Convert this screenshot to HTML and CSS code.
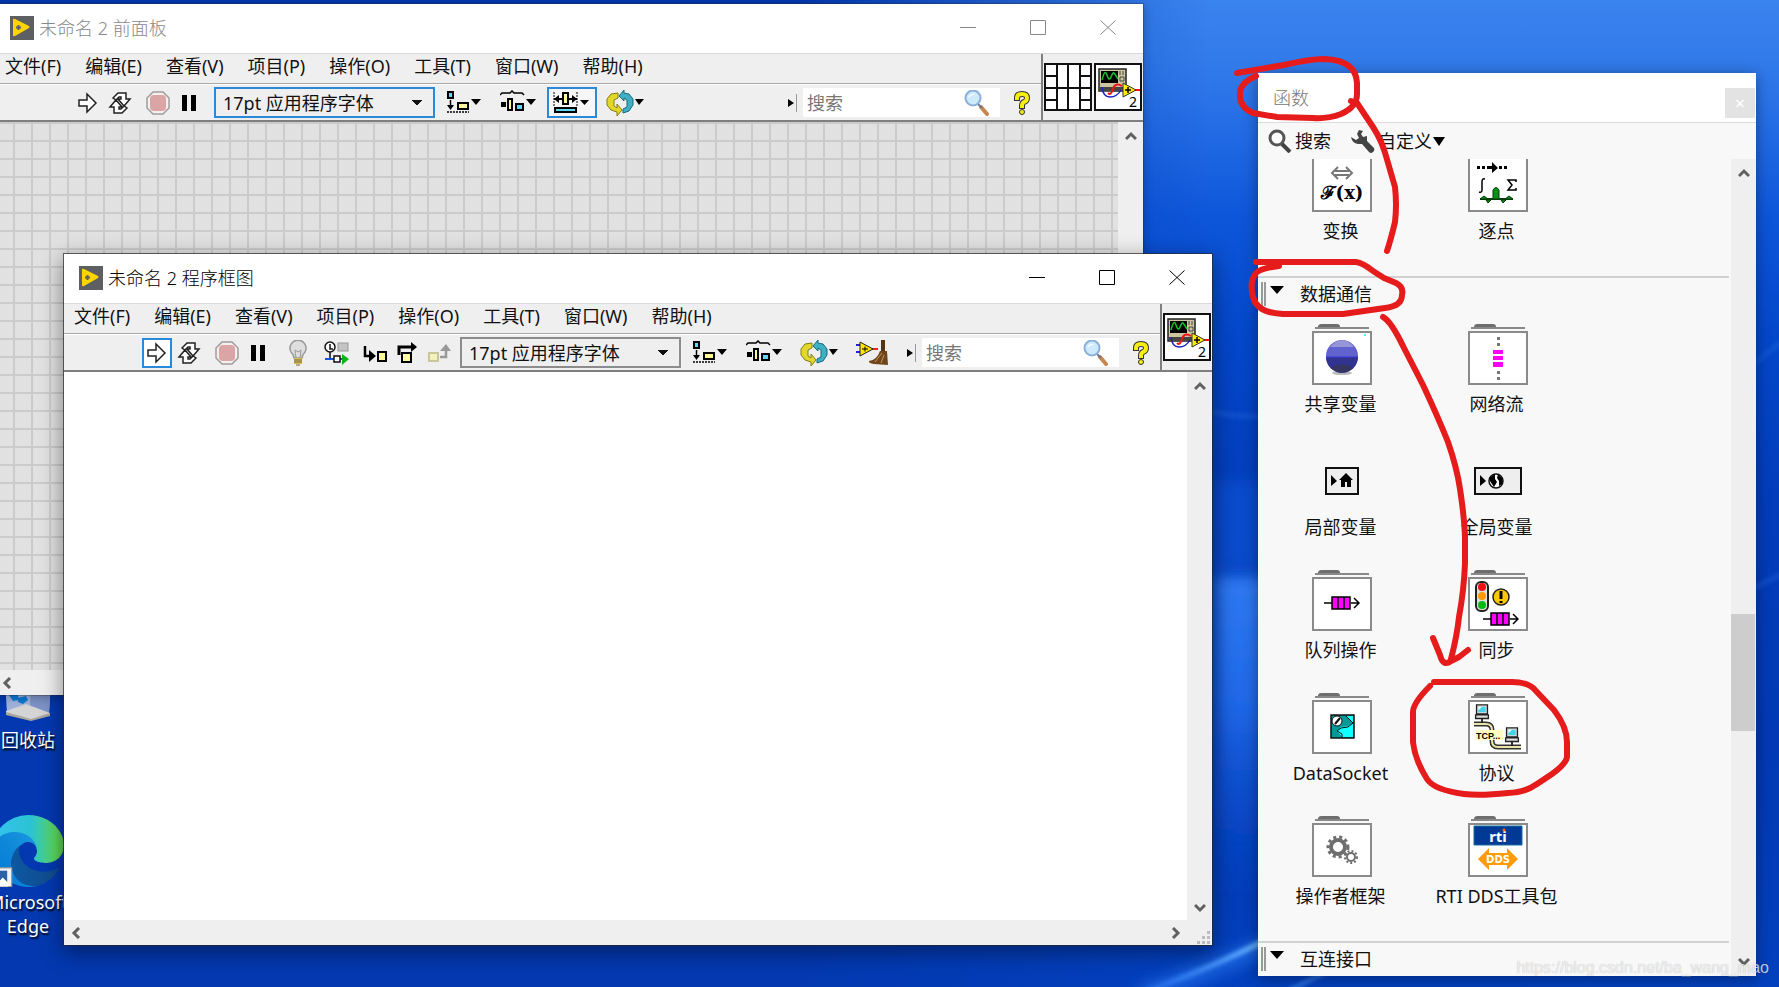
FILE: index.html
```html
<!DOCTYPE html>
<html lang="zh-CN">
<head>
  <meta charset="UTF-8">
  <meta name="viewport" content="width=device-width, initial-scale=1.0">
  <title>LabVIEW</title>
  <link rel="stylesheet" href="styles.css">
</head>
<body>
  <!-- shared icons -->
  <svg class="defs" aria-hidden="true">
    <symbol id="i-app" viewBox="0 0 24 24">
      <path fill="#5d5f62" d="M0 0h24v24H0z"/>
      <path fill="#ffd500" d="M3 4q0-2 2-1l14 7q1 1 0 2L5 20q-2 1-2-1z"/>
      <path stroke="#5d5f62" stroke-width="2" d="M6 11.500h5M8.500 9v5"/>
    </symbol>
    <symbol id="i-run" viewBox="0 0 30 30">
      <path fill="#fff" stroke="#222" stroke-width="1.500" d="M6 12h8V6l9 9-9 9v-6H6z"/>
    </symbol>
    <symbol id="i-loop" viewBox="0 0 24 24">
      <g fill="#fff" stroke="#222" stroke-width="1.500" stroke-linejoin="miter">
        <path d="M5 7l5-5h8v6h4l-6 7-6-7h3V6h-2L8 9z"/>
        <path d="M19 17l-5 5H6v-6H2l6-7 6 7h-3v2h2l3-3z"/>
      </g>
    </symbol>
    <symbol id="i-stop" viewBox="0 0 24 24">
      <path fill="#f4f0f0" stroke="#a09c9c" stroke-width="1.500" d="M7 1h10l6 6v10l-6 6H7l-6-6V7z"/>
      <rect x="4" y="4" width="16" height="16" rx="4" fill="#dba5a5"/>
    </symbol>
    <symbol id="i-pause" viewBox="0 0 14 16"><path d="M0 0h5v16H0zM9 0h5v16H9z"/></symbol>
    <symbol id="i-bulb" viewBox="0 0 26 26">
      <path fill="#dedede" stroke="#999" stroke-width="1.500" d="M9 18q0-3-3-6a8 8 0 1 1 14 0q-3 3-3 6z"/>
      <path fill="none" stroke="#999" d="M11 18l-1-8 3 2 3-2-1 8"/>
      <path fill="#d9bf58" d="M9 18h8v6H9z"/><path stroke="#77683b" d="M9 20h8M9 22h8M11 25h4"/>
    </symbol>
    <symbol id="i-retain" viewBox="0 0 32 26">
      <circle cx="9" cy="7" r="5" fill="#fff" stroke="#111" stroke-width="1.500"/>
      <path d="M9 4v5h3M9 12v7" fill="none" stroke="#111" stroke-width="1.500"/>
      <rect x="17" y="3" width="10" height="8" fill="#c4c4c4" stroke="#999"/>
      <path stroke="#1455d9" stroke-width="2" d="M4 19h18"/>
      <path fill="#fff" stroke="#111" stroke-width="1.500" d="M13 16h6v6h-6z"/>
      <path fill="#0ab519" d="M21 14l7 5-7 6z"/>
    </symbol>
    <symbol id="i-into" viewBox="0 0 24 24">
      <path fill="none" stroke="#000" stroke-width="2.500" d="M2 5v10h7"/><path d="M6 9l7 6-7 6z"/>
      <path fill="#fffa9a" stroke="#000" stroke-width="2" d="M15 11h8v9h-8z"/>
    </symbol>
    <symbol id="i-over" viewBox="0 0 20 24">
      <path fill="none" stroke="#000" stroke-width="3" d="M2 14V6h13"/><path d="M14 1l6 5-6 5z"/>
      <path fill="#fffa9a" stroke="#000" stroke-width="2" d="M5 12h9v9H5z"/>
    </symbol>
    <symbol id="i-out" viewBox="0 0 24 24">
      <path fill="#f3f1bd" stroke="#c9c79a" stroke-width="2" d="M2 12h9v8H2z"/>
      <path fill="none" stroke="#999" stroke-width="2.500" d="M13 16h6V8"/><path fill="#999" d="M13 10l6-7 5 7z"/>
    </symbol>
    <symbol id="i-align" viewBox="0 0 38 26">
      <path fill="#5fd8f5" stroke="#000" stroke-width="2" d="M2 2h5v6H2z"/>
      <path stroke="#000" stroke-width="1.500" d="M4.500 10v8" fill="none"/>
      <path stroke="#000" stroke-width="1.500" stroke-dasharray="2 1" d="M1 22h22"/>
      <path d="M1 15h7l-3.500 5z"/>
      <path fill="#fff89a" stroke="#000" stroke-width="2" d="M12 13h10v6H12z"/>
      <path d="M25 9h10l-5 6z"/>
    </symbol>
    <symbol id="i-dist" viewBox="0 0 38 26">
      <path fill="none" stroke="#000" stroke-width="1.500" d="M0 5l2-2h8l2-2 2 2h8l2 2"/>
      <path d="M1 12h5v5H1z"/>
      <path fill="#fff89a" stroke="#000" stroke-width="2" d="M8 9h4v11H8z"/>
      <path fill="#5fd8f5" stroke="#000" stroke-width="2" d="M16 14h7v6h-7z"/>
      <path d="M26 9h10l-5 6z"/>
    </symbol>
    <symbol id="i-resize" viewBox="0 0 38 26">
      <path stroke="#000" stroke-dasharray="2 1" d="M1 2v14M24 2v14"/>
      <path stroke="#000" stroke-width="2" d="M1 9h8M16 9h8"/>
      <path d="M1 9l5-4v8zM24 9l-5-4v8z"/>
      <path fill="#fff89a" stroke="#000" stroke-width="2" d="M10 3h5v11h-5z"/>
      <path fill="#5fd8f5" stroke="#000" stroke-width="2" d="M2 18h21v4H2z"/>
      <path d="M27 10h9l-4.500 5z"/>
    </symbol>
    <symbol id="i-reorder" viewBox="0 0 38 26">
      <path fill="#e3d729" stroke="#837c13" d="M12 3v5l-4 2v6l3 2v-4l5 6-5 6v-4l-6-2-4-5v-6l4-5z"/>
      <path fill="#3eafc4" stroke="#176b7b" d="M18 0l-5 6 5 5V8l3 2v7l-4 2v4l6-2 4-6V9l-4-5-5-1z"/>
      <path d="M29 9h9l-5 6z"/>
    </symbol>
    <symbol id="i-broom" viewBox="0 0 38 28">
      <path stroke="#e22" stroke-width="2" d="M14 10h10"/><path stroke="#22d" stroke-width="2" d="M2 6h5M2 13h5"/>
      <path fill="#ffe500" stroke="#222" d="M6 3l13 7-13 7z"/><path stroke="#000" d="M8 10h6M11 7.500v5"/>
      <path stroke="#593410" stroke-width="4" d="M29 1v12"/>
      <path fill="#70451c" d="M26 12h7l1 14-14-1q-6-1-5-3 8-1 11-10z"/>
      <path fill="none" stroke="#c39b5b" d="M28 14l-7 9M30 16l-3 8"/>
    </symbol>
    <symbol id="i-glass" viewBox="0 0 26 26">
      <path stroke="#c98750" stroke-width="4" stroke-linecap="round" d="M17 17l6 7"/>
      <path stroke="#6d7890" stroke-width="2" d="M14 14l4 4"/>
      <circle cx="9" cy="8" r="7.500" fill="#cdeafc" stroke="#8cafd9" stroke-width="2"/>
      <path fill="#fff" d="M4 8q2-5 8-4-5 1-8 4z"/>
    </symbol>
    <symbol id="i-help" viewBox="0 0 16 24">
      <g fill="none" stroke-linecap="square">
        <path stroke="#333" stroke-width="6" d="M3 7q0-4 5-4t5 4q0 3-3 4-2 1-2 4"/>
        <path stroke="#f7ee12" stroke-width="4" d="M3 7q0-4 5-4t5 4q0 3-3 4-2 1-2 4"/>
      </g>
      <circle cx="8" cy="21" r="2.500" fill="#f7ee12" stroke="#333"/>
    </symbol>
    <symbol id="i-vi" viewBox="0 0 48 48">
      <path fill="#fff" stroke="#111" stroke-width="2" d="M1 1h46v46H1z"/>
      <path fill="#cbc6a0" stroke="#222" stroke-width="1.500" d="M5 6h27v22H5z"/>
      <path d="M7 8h17v12H7z"/>
      <path fill="none" stroke="#16c42c" stroke-width="1.500" d="M8 17q3-12 5-5t4 2 3-4 4 6"/>
      <path stroke="#444" d="M26 8v4M29 8v4M26 14h4v4h-4z" fill="none"/>
      <path fill="#444" d="M6 24h24v3H6z"/>
      <path fill="none" stroke="#1a1fc0" stroke-width="1.500" d="M8 24q1 10 8 10t11-7"/>
      <path fill="none" stroke="#ee1414" stroke-width="2" d="M14 30q3 3 5-4t9-3M40 27h6"/>
      <path fill="#ffee00" stroke="#333" d="M29 20l13 7-13 7z"/><path stroke="#000" stroke-width="1.500" d="M31 27h6M34 24v6"/>
    </symbol>
    <symbol id="i-pane" viewBox="0 0 48 48">
      <path fill="#fff" stroke="#111" stroke-width="2" d="M1 1h46v46H1zM13 1v46M24 1v46M36 1v46M1 25h46M1 13h12M1 37h12M36 13h11M36 37h11"/>
    </symbol>
    <symbol id="i-folder" viewBox="0 0 60 61">
      <path fill="#6e6e6e" d="M6 2q1-2 3-2h16q3 0 3 3H6z"/><path fill="#888" d="M3 3h54v2H3z"/>
      <path fill="#fff" stroke="#8a8a8a" stroke-width="2" d="M1 8h58v52H1z"/>
    </symbol>
    <symbol id="i-folder-cut" viewBox="0 0 60 61">
      <path fill="#fff" stroke="#8a8a8a" stroke-width="2" d="M1 0v60h58V0"/>
    </symbol>
    <symbol id="i-queue" viewBox="0 0 36 16">
      <path stroke="#000" stroke-width="1.500" d="M0 8h8M27 8h8M30 3l5 5-5 5" fill="none"/>
      <path fill="#f0f" stroke="#000" stroke-width="1.500" d="M8 2h18v12H8zM14 2v12M20 2v12"/>
    </symbol>
    <symbol id="i-pc" viewBox="0 0 16 22">
      <path fill="#ddd" stroke="#222" stroke-width="1.500" d="M2 1h12v10H2zM1 12h14v4H1z"/>
      <path fill="#43d3e8" d="M4 3h8v6H4z"/><path fill="#fff" d="M4 3h4L4 7z"/><path stroke="#222" stroke-width="2" d="M8 16v5"/>
    </symbol>
    <symbol id="i-up" viewBox="0 0 12 10"><path fill="none" stroke="#606060" stroke-width="3" d="M1 8l5-5 5 5"/></symbol>
    <symbol id="i-down" viewBox="0 0 12 10"><path fill="none" stroke="#606060" stroke-width="3" d="M1 2l5 5 5-5"/></symbol>
    <symbol id="i-left" viewBox="0 0 10 12"><path fill="none" stroke="#606060" stroke-width="3" d="M8 1L3 6l5 5"/></symbol>
    <symbol id="i-right" viewBox="0 0 10 12"><path fill="none" stroke="#606060" stroke-width="3" d="M2 1l5 5-5 5"/></symbol>
    <symbol id="i-min" viewBox="0 0 16 16"><path stroke="currentColor" d="M0 7.500h16"/></symbol>
    <symbol id="i-max" viewBox="0 0 16 16"><path fill="none" stroke="currentColor" d="M.5.5h15v14H.5z"/></symbol>
    <symbol id="i-close" viewBox="0 0 16 16"><path stroke="currentColor" d="M.5.5l15 14M15.500.5l-15 14"/></symbol>
    <symbol id="i-tick" viewBox="0 0 11 18"><path d="M1 5l6 4-6 4z"/><path stroke="#999" d="M9.500 0v18"/></symbol>
  </svg>

  <main class="desktop">
    <svg class="wallpaper" viewBox="0 0 1779 987" preserveAspectRatio="none" aria-hidden="true">
      <defs>
        <linearGradient id="glow" x1="0" y1="0" x2="0" y2="1"><stop offset="0" stop-color="#2f7af2"/><stop offset=".4" stop-color="#1f68e8"/><stop offset="1" stop-color="#0a4fd2" stop-opacity="0"/></linearGradient>
        <linearGradient id="streak"><stop offset="0" stop-color="#2b7bff" stop-opacity="0"/><stop offset=".6" stop-color="#4a9aff"/><stop offset="1" stop-color="#8ad0ff"/></linearGradient>
        <filter id="soft"><feGaussianBlur stdDeviation="8"/></filter>
        <filter id="soft-sm"><feGaussianBlur stdDeviation="2"/></filter>
      </defs>
      <path d="M1215 575h60v320h-60z" fill="url(#glow)" filter="url(#soft)"/>
      <path d="M1215 480h60v90h-60z" fill="#0c55d8" opacity=".6" filter="url(#soft)"/>
      <path d="M1140 996Q1200 975 1290 935" fill="none" stroke="#2c7cf5" stroke-width="14" opacity=".7" filter="url(#soft)"/>
      <path d="M1110 1002Q1190 980 1290 928" fill="none" stroke="url(#streak)" stroke-width="5" filter="url(#soft-sm)"/>
      <path d="M1290 990l40-20" stroke="#3a87ef" stroke-width="3" filter="url(#soft-sm)"/>
      <path d="M1212 412q30 6 60 4M1740 375l50-40M1750 590l40-20" stroke="#2468df" stroke-width="4" opacity=".5" fill="none" filter="url(#soft-sm)"/>
    </svg>

    <div class="shortcut shortcut-bin">
      <svg width="48" height="60" viewBox="0 0 48 60" aria-hidden="true">
        <path fill="#9fb2da" d="M0 4h48l-3 48-19 7L3 52z"/><path fill="#7d93c8" d="M27 4h21l-3 48-19 7z"/>
        <path fill="#d4d4d4" d="M2 50l20-7 24 9v2l-19 5-25-7z"/><path fill="#aaa69d" d="M2 51l25 7 19-6v3l-19 5L2 54z"/>
        <path fill="#0b79d4" d="M5 34h9l1 5-6 1zM14 37l8-2 2 4-5 4-5-2z"/>
      </svg>
      <span>回收站</span>
    </div>
    <div class="shortcut shortcut-edge">
      <svg width="72" height="72" viewBox="0 0 256 256" aria-hidden="true">
        <defs>
          <linearGradient id="e1"><stop offset="0" stop-color="#0c59a4"/><stop offset="1" stop-color="#114a8b"/></linearGradient>
          <linearGradient id="e2" x1="1" y1="0" x2="0" y2="1"><stop offset="0" stop-color="#1b9de2"/><stop offset=".5" stop-color="#0e86d8"/><stop offset="1" stop-color="#0078d7"/></linearGradient>
          <linearGradient id="e3"><stop offset="0" stop-color="#35c1f1"/><stop offset=".55" stop-color="#2bc3d2"/><stop offset=".88" stop-color="#5ad85c"/><stop offset="1" stop-color="#58c94e"/></linearGradient>
        </defs>
        <path fill="url(#e1)" d="M231 190.500c-3.400 1.800-6.900 3.400-10.500 4.700a101.900 101.900 0 0 1-35.900 6.500c-47.300 0-88.500-32.500-88.500-74.300a31.500 31.500 0 0 1 16.400-27.300c-42.800 1.800-53.800 46.400-53.800 72.500 0 74 68.100 81.400 82.800 81.400 7.900 0 19.800-2.300 27-4.600l1.300-.4a128.300 128.300 0 0 0 66.600-52.800 4 4 0 0 0-5.400-5.700z"/>
        <path fill="url(#e2)" d="M105.700 241.400a79.200 79.200 0 0 1-22.700-21.300 80.700 80.700 0 0 1 29.500-120c3.200-1.500 8.500-4.100 15.600-4a32.400 32.400 0 0 1 25.700 13 31.900 31.900 0 0 1 6.300 18.700c0-.2 24.500-79.600-80-79.600-43.900 0-80 41.700-80 78.200a130.200 130.200 0 0 0 12.100 56 128 128 0 0 0 156.400 67 75.500 75.500 0 0 1-62.800-8z"/>
        <path fill="url(#e3)" d="M152.300 148.900c-.9 1-3.400 2.500-3.400 5.600 0 2.600 1.700 5.200 4.800 7.300 14.300 10 41.400 8.600 41.500 8.600a59.600 59.600 0 0 0 30.300-8.300 61.400 61.400 0 0 0 30.400-52.900c.3-22.400-8-37.300-11.300-43.900C223.500 23.900 177.700 0 128 0A128 128 0 0 0 0 126.200c.5-36.500 36.800-66 80-66 3.500 0 23.500.3 42 10a72.600 72.600 0 0 1 30.900 29.300c6.100 10.600 7.200 24.100 7.200 29.500s-2.700 13.300-7.800 19.900z"/>
        <path fill="#f4f4f4" stroke="#999" stroke-width="4" d="M0 188h70v66H0z"/><path fill="#2c62a8" d="M6 198h48v52H6z"/>
        <path fill="#fff" d="M38 222l20 20v12H6v-10h12z"/>
      </svg>
      <span>Microsoft<br>Edge</span>
    </div>

    <section class="window front-panel">
      <header class="titlebar">
        <svg width="24" height="24"><use href="#i-app"/></svg>
        <h2>未命名 2 前面板</h2>
        <div class="controls">
          <button aria-label="最小化"><svg width="16" height="16"><use href="#i-min"/></svg></button>
          <button aria-label="最大化"><svg width="16" height="16"><use href="#i-max"/></svg></button>
          <button aria-label="关闭"><svg width="16" height="16"><use href="#i-close"/></svg></button>
        </div>
      </header>
      <div class="head">
        <div class="bars">
          <nav class="menubar">
            <button>文件(F)</button><button>编辑(E)</button><button>查看(V)</button><button>项目(P)</button><button>操作(O)</button><button>工具(T)</button><button>窗口(W)</button><button>帮助(H)</button>
          </nav>
          <div class="toolbar">
            <div class="run-tools">
              <button aria-label="运行"><svg width="30" height="30"><use href="#i-run"/></svg></button>
              <button aria-label="连续运行"><svg width="24" height="24"><use href="#i-loop"/></svg></button>
              <button class="stop" aria-label="中止"><svg width="24" height="24"><use href="#i-stop"/></svg></button>
              <button class="pause" aria-label="暂停"><svg width="14" height="16"><use href="#i-pause"/></svg></button>
            </div>
            <select class="font-select active" aria-label="字体"><option>17pt 应用程序字体</option></select>
            <div class="arrange-tools">
              <button aria-label="对齐"><svg width="38" height="26"><use href="#i-align"/></svg></button>
              <button aria-label="分布"><svg width="38" height="26"><use href="#i-dist"/></svg></button>
              <button class="boxed" aria-label="调整大小"><svg width="38" height="26"><use href="#i-resize"/></svg></button>
              <button aria-label="重新排序"><svg width="38" height="26"><use href="#i-reorder"/></svg></button>
            </div>
            <div class="search-tools">
              <svg width="11" height="18"><use href="#i-tick"/></svg>
              <label class="search"><input type="text" placeholder="搜索" aria-label="搜索"><svg width="26" height="26"><use href="#i-glass"/></svg></label>
              <button aria-label="帮助"><svg width="16" height="24"><use href="#i-help"/></svg></button>
            </div>
          </div>
        </div>
        <div class="vi-icons">
          <svg width="48" height="48"><use href="#i-pane"/></svg>
          <svg width="48" height="48"><use href="#i-vi"/><text x="35" y="44" class="vi-num">2</text></svg>
        </div>
      </div>
      <div class="work">
        <div class="canvas grid"></div>
        <div class="vscroll"><svg width="12" height="10"><use href="#i-up"/></svg><svg width="12" height="10"><use href="#i-down"/></svg></div>
      </div>
      <div class="hscroll"><svg width="10" height="12"><use href="#i-left"/></svg><svg width="10" height="12"><use href="#i-right"/></svg></div>
    </section>

    <section class="window block-diagram">
      <header class="titlebar">
        <svg width="24" height="24"><use href="#i-app"/></svg>
        <h2>未命名 2 程序框图</h2>
        <div class="controls">
          <button aria-label="最小化"><svg width="16" height="16"><use href="#i-min"/></svg></button>
          <button aria-label="最大化"><svg width="16" height="16"><use href="#i-max"/></svg></button>
          <button aria-label="关闭"><svg width="16" height="16"><use href="#i-close"/></svg></button>
        </div>
      </header>
      <div class="head">
        <div class="bars">
          <nav class="menubar">
            <button>文件(F)</button><button>编辑(E)</button><button>查看(V)</button><button>项目(P)</button><button>操作(O)</button><button>工具(T)</button><button>窗口(W)</button><button>帮助(H)</button>
          </nav>
          <div class="toolbar">
            <div class="run-tools">
              <button class="focused" aria-label="运行"><svg width="30" height="30"><use href="#i-run"/></svg></button>
              <button aria-label="连续运行"><svg width="24" height="24"><use href="#i-loop"/></svg></button>
              <button class="stop" aria-label="中止"><svg width="24" height="24"><use href="#i-stop"/></svg></button>
              <button class="pause" aria-label="暂停"><svg width="14" height="16"><use href="#i-pause"/></svg></button>
            </div>
            <div class="debug-tools">
              <button aria-label="高亮显示"><svg width="26" height="26"><use href="#i-bulb"/></svg></button>
              <button aria-label="保存连线值"><svg width="32" height="26"><use href="#i-retain"/></svg></button>
              <button aria-label="步入"><svg width="24" height="24"><use href="#i-into"/></svg></button>
              <button aria-label="步过"><svg width="20" height="24"><use href="#i-over"/></svg></button>
              <button aria-label="步出"><svg width="24" height="24"><use href="#i-out"/></svg></button>
            </div>
            <select class="font-select" aria-label="字体"><option>17pt 应用程序字体</option></select>
            <div class="arrange-tools">
              <button aria-label="对齐"><svg width="38" height="26"><use href="#i-align"/></svg></button>
              <button aria-label="分布"><svg width="38" height="26"><use href="#i-dist"/></svg></button>
              <button aria-label="重新排序"><svg width="38" height="26"><use href="#i-reorder"/></svg></button>
              <button aria-label="整理"><svg width="38" height="28"><use href="#i-broom"/></svg></button>
            </div>
            <div class="search-tools">
              <svg width="11" height="18"><use href="#i-tick"/></svg>
              <label class="search"><input type="text" placeholder="搜索" aria-label="搜索"><svg width="26" height="26"><use href="#i-glass"/></svg></label>
              <button aria-label="帮助"><svg width="16" height="24"><use href="#i-help"/></svg></button>
            </div>
          </div>
        </div>
        <div class="vi-icons"><svg width="48" height="48"><use href="#i-vi"/><text x="35" y="44" class="vi-num">2</text></svg></div>
      </div>
      <div class="work">
        <div class="canvas"></div>
        <div class="vscroll"><svg width="12" height="10"><use href="#i-up"/></svg><svg width="12" height="10"><use href="#i-down"/></svg></div>
      </div>
      <div class="hscroll">
        <svg width="10" height="12"><use href="#i-left"/></svg>
        <svg width="10" height="12"><use href="#i-right"/></svg>
        <svg class="grip" width="14" height="14" viewBox="0 0 14 14"><path fill="#bbb" d="M11 1h3v3h-3zM6 6h3v3H6zM11 6h3v3h-3zM1 11h3v3H1zM6 11h3v3H6zM11 11h3v3h-3z"/></svg>
      </div>
    </section>

    <aside class="palette">
      <header class="palette-title">
        <h2>函数</h2>
        <button class="palette-close" aria-label="关闭">×</button>
      </header>
      <div class="palette-tools">
        <button>
          <svg width="24" height="24" viewBox="0 0 24 24"><circle cx="9" cy="9" r="7" fill="#fff" stroke="#555" stroke-width="3"/><path stroke="#444" stroke-width="4" d="M14 15l8 8"/></svg>
          搜索
        </button>
        <button>
          <svg width="24" height="24" viewBox="0 0 24 24"><path fill="#444" d="M8 1l4 1-2 3 2 3 4-1v5l7 7q1 3-1 4-2 2-4 0l-7-8H7q-6-1-7-7l5 3 3-2-2-4z"/></svg>
          自定义<svg class="caret" width="12" height="9" viewBox="0 0 12 9"><path d="M0 0h12L6 9z"/></svg>
        </button>
      </div>
      <div class="palette-body">
        <div class="palette-list">
          <div class="items first">
            <div class="item">
              <svg width="60" height="61" viewBox="0 0 60 61"><use href="#i-folder-cut"/>
                <path fill="none" stroke="#777" stroke-width="2" d="M23 20h14M23 24h14M26 16l-6 6 6 6M34 16l6 6-6 6"/>
                <text x="30" y="48" class="fx">ℱ(x)</text></svg>
              <span>变换</span>
            </div>
            <div class="item">
              <svg width="60" height="61" viewBox="0 0 60 61"><use href="#i-folder-cut"/>
                <path d="M9 15h3v3H9zM14 15h3v3h-3zM19 15h5v-4l6 6-6 5v-4h-5zM31 15h3v3h-3zM36 15h3v3h-3z"/>
                <path fill="none" stroke="#000" stroke-width="1.500" d="M17 28q-3-1-3 3v8q0 3-3 2M48 31v-2h-8l4 5-4 5h8v-2"/>
                <path fill="none" stroke="#063c09" stroke-width="2" d="M12 48h33"/>
                <path fill="#0a9016" stroke="#063c09" d="M12 48l4-3 4 3zM25 48V39q3-5 6 0v9zM37 48l4-3 4 3zM18 49h5l-3 3zM33 49h5l-3 3z"/></svg>
              <span>逐点</span>
            </div>
          </div>
          <h3 class="section-title"><i></i><svg width="14" height="8" viewBox="0 0 14 8"><path d="M0 0h14L7 8z"/></svg>数据通信</h3>
          <div class="items">
            <div class="item">
              <svg width="60" height="61" viewBox="0 0 60 61"><use href="#i-folder"/>
                <ellipse cx="30" cy="49" rx="10" ry="2" fill="#bbb"/><circle cx="30" cy="32" r="16" fill="#6262ce"/>
                <path fill="#32328f" d="M14 33h32a16 16 0 0 1-32 0z"/><path fill="#35355f" d="M19 44q11-7 22 0-11 9-22 0z"/><path fill="#9595d8" d="M18 23q12-14 24 0z"/>
                <path stroke="#3636e0" d="M14 33h32"/><path fill="#3ff" d="M52 10h2v2h-2z"/></svg>
              <span>共享变量</span>
            </div>
            <div class="item">
              <svg width="60" height="61" viewBox="0 0 60 61"><use href="#i-folder"/>
                <path fill="#777" d="M29 13h3v3h-3zM29 19h3v3h-3zM29 47h3v3h-3zM29 53h3v3h-3z"/>
                <path fill="#f0f" d="M25 26h10v4H25zM25 32h10v4H25zM25 38h10v5H25z"/></svg>
              <span>网络流</span>
            </div>
            <div class="item">
              <svg width="60" height="61" viewBox="0 0 60 61">
                <path fill="#eee" stroke="#111" stroke-width="2" d="M14 21h32v26H14z"/><path d="M19 28l6 6-6 5zM34 26l7 7h-2v7h-4v-5h-2v5h-4v-7h-2z"/></svg>
              <span>局部变量</span>
            </div>
            <div class="item">
              <svg width="60" height="61" viewBox="0 0 60 61">
                <path fill="#eee" stroke="#111" stroke-width="2" d="M7 21h46v26H7z"/><path d="M12 28l6 6-6 5z"/>
                <circle cx="28" cy="34" r="7" fill="#fff" stroke="#111" stroke-width="1.500"/><path d="M21 31l6-4v5l2 3-3 5-4-6zM30 27l5 5-1 5-3 2v-5l-2-3z"/></svg>
              <span>全局变量</span>
            </div>
            <div class="item">
              <svg width="60" height="61" viewBox="0 0 60 61"><use href="#i-folder"/><use href="#i-queue" x="12" y="25" width="36" height="16"/></svg>
              <span>队列操作</span>
            </div>
            <div class="item">
              <svg width="60" height="61" viewBox="0 0 60 61"><use href="#i-folder"/>
                <rect x="8" y="12" width="12" height="29" rx="5" fill="#ddd" stroke="#222" stroke-width="2"/>
                <circle cx="14" cy="17" r="4" fill="#e11"/><circle cx="14" cy="26" r="4" fill="#f90"/><circle cx="14" cy="35" r="4" fill="#0b1"/>
                <circle cx="33" cy="27" r="8" fill="#ffc800" stroke="#222" stroke-width="1.500"/><path stroke="#000" stroke-width="3" d="M33 21v8M33 31v2"/>
                <use href="#i-queue" x="15" y="41" width="36" height="16"/></svg>
              <span>同步</span>
            </div>
            <div class="item">
              <svg width="60" height="61" viewBox="0 0 60 61"><use href="#i-folder"/>
                <path fill="#009999" stroke="#111" stroke-width="1.500" d="M19 22h23v23H19z"/>
                <path fill="#1ff" d="M34 23h7v21H30l-5-6 4-4 7-1 5-3z"/><path fill="none" stroke="#111" d="M34 23l7 7-5 4-7 1-4 3 5 3v4"/>
                <circle cx="25" cy="28" r="5" fill="#fff" stroke="#111"/><path stroke="#111" stroke-width="2" d="M23 31l5-6"/></svg>
              <span>DataSocket</span>
            </div>
            <div class="item">
              <svg width="60" height="61" viewBox="0 0 60 61"><use href="#i-folder"/>
                <g fill="none"><path stroke="#333" stroke-width="5" d="M6 31h12q6 0 6 6v11q0 6 6 6h23"/><path stroke="#eae4a6" stroke-width="2" d="M6 31h12q6 0 6 6v11q0 6 6 6h23"/></g>
                <use href="#i-pc" x="6" y="11" width="16" height="20"/><use href="#i-pc" x="36" y="34" width="16" height="20"/>
                <path fill="#fffbc0" d="M8 37h27v10H8z"/><text x="8" y="46" class="tcp">TCP...</text></svg>
              <span>协议</span>
            </div>
            <div class="item">
              <svg width="60" height="61" viewBox="0 0 60 61"><use href="#i-folder"/>
                <g fill="none" stroke="#6e6e6e"><circle cx="26" cy="31" r="7" stroke-width="4"/><circle cx="26" cy="31" r="10" stroke-width="3" stroke-dasharray="3 3"/>
                <circle cx="39" cy="41" r="4" stroke-width="2"/><circle cx="39" cy="41" r="6" stroke-width="2" stroke-dasharray="2 2"/></g></svg>
              <span>操作者框架</span>
            </div>
            <div class="item">
              <svg width="60" height="61" viewBox="0 0 60 61"><use href="#i-folder"/>
                <path fill="#003a94" stroke="#146e9c" d="M6 10h48v19H6z"/><text x="30" y="26" class="rti">rti</text><circle cx="36" cy="14" r="1.500" fill="#f60"/>
                <path fill="#ff9a0a" d="M10 43l11-11v5h18v-5l11 11-11 11v-5H21v5z"/><text x="30" y="47" class="dds">DDS</text></svg>
              <span>RTI DDS工具包</span>
            </div>
          </div>
          <h3 class="section-title"><i></i><svg width="14" height="8" viewBox="0 0 14 8"><path d="M0 0h14L7 8z"/></svg>互连接口</h3>
        </div>
        <div class="palette-scroll">
          <svg width="12" height="10"><use href="#i-up"/></svg>
          <div class="track"><div class="thumb"></div></div>
          <svg width="12" height="10"><use href="#i-down"/></svg>
        </div>
      </div>
    </aside>

    <!-- red pen marks -->
    <svg class="marks" aria-hidden="true">
      <path d="M1237 73L1284 65Q1310 59 1324 59 1356 60 1357 83V94Q1357 107 1341 114 1328 119 1313 118L1277 117 1253 113Q1239 107 1240 93 1240 83 1256 76"/>
      <path d="M1351 101L1357 103 1373 127Q1382 141 1386 156L1395 187Q1397 205 1395 222 1391 239 1387 251"/>
      <path d="M1256 262H1356Q1363 263 1373 271L1384 278 1396 283Q1404 287 1402 295 1402 306 1385 308L1343 314H1283Q1257 313 1253 297 1249 282 1256 273 1261 268 1279 266"/>
      <path d="M1383 317Q1391 321 1404 348L1423 385Q1438 417 1448 442 1457 468 1460 489 1464 515 1465 535V563Q1464 590 1459 617 1457 636 1451 659"/>
      <path d="M1433 638L1440 655Q1443 667 1451 661L1459 657 1468 650"/>
      <path d="M1434 682H1512Q1529 682 1536 691L1554 710Q1567 727 1567 742V757Q1566 764 1552 774L1537 784Q1524 793 1508 793 1480 796 1464 794 1434 790 1427 779 1415 760 1413 742V712Q1413 703 1430 686"/>
    </svg>
    <div class="watermark">https://blog.csdn.net/ba_wang_mao</div>
  </main>
</body>
</html>
```

FILE: styles.css
```css
* {
  box-sizing: border-box;
}

body {
  margin: 0;
  font-family: "Noto Sans", "Noto Sans CJK SC", sans-serif;
  font-size: 18px;
  line-height: 24px;
  color: #111;
}

h2,
h3 {
  margin: 0;
  font-size: 18px;
  font-weight: normal;
}

svg {
  display: block;
  flex: none;
}

button {
  display: flex;
  align-items: center;
  justify-content: center;
  padding: 0;
  border: 0;
  background: none;
  font: inherit;
  color: inherit;
  white-space: nowrap;
}

.defs {
  position: absolute;
  width: 0;
  height: 0;
}

.desktop {
  position: relative;
  height: 100vh;
  overflow: hidden;
  background:
    linear-gradient(to right, #0338b0 0, #0338b0 45%, rgba(3, 56, 176, 0) 68%),
    linear-gradient(#3a84ee 0, #2f78ea 8%, #0d56da 22%, #0447cb 34%, #033dbb 50%, #0339b4 75%, #0340bd 100%);
}

.wallpaper,
.marks {
  position: absolute;
  top: 0;
  left: 0;
  width: 100%;
  height: 100%;
}

/* desktop shortcuts */
.shortcut {
  position: absolute;
  width: 96px;
  left: -20px;
  display: flex;
  flex-direction: column;
  align-items: center;
  text-align: center;
  color: #fff;
  text-shadow: 1px 2px 2px #000;
}

.shortcut-bin {
  top: 661px;
  gap: 7px;
}

.shortcut-edge {
  top: 815px;
  gap: 3px;
}

/* windows */
.window {
  position: absolute;
  display: flex;
  flex-direction: column;
  width: 1148px;
  height: 691px;
  background: #efefef;
  box-shadow: 0 0 0 1px rgba(40, 40, 40, 0.7), 0 6px 20px 2px rgba(0, 0, 0, 0.4);
}

.front-panel {
  left: -5px;
  top: 4px;
  box-shadow: 0 0 0 1px rgba(40, 40, 40, 0.3), 0 2px 10px rgba(0, 0, 0, 0.3);
}

.block-diagram {
  left: 64px;
  top: 254px;
}

.titlebar {
  display: flex;
  align-items: center;
  gap: 5px;
  height: 49px;
  padding: 0 0 2px 15px;
  background: #fff;
  color: #000;
}

.front-panel .titlebar {
  color: #888;
}

.titlebar h2,
.palette-title h2 {
  font-weight: 300;
}

.controls {
  display: flex;
  align-self: stretch;
  margin-left: auto;
}

.controls button {
  width: 70px;
}

.head {
  display: flex;
  border-top: 1px solid #d9d9d9;
  border-bottom: 2px solid #7f7f7f;
}

.bars {
  flex: 1;
}

.menubar {
  display: flex;
  gap: 24px;
  height: 30px;
  padding: 0 10px;
  border-bottom: 1px solid #a8a8a8;
}

.menubar button {
  height: 24px;
}

.toolbar {
  display: flex;
  align-items: center;
  height: 36px;
  padding: 0 11px 0 78px;
  border-top: 1px solid #fff;
}

.run-tools,
.debug-tools,
.arrange-tools,
.search-tools {
  display: flex;
  align-items: center;
}

.run-tools {
  gap: 5px;
}

.run-tools .stop {
  margin-left: 9px;
}

.run-tools .pause {
  margin-left: 7px;
}

.focused {
  outline: 2px solid #2a8ad8;
  outline-offset: -2px;
  background: #fff;
}

.debug-tools {
  gap: 10px;
  margin-left: 20px;
}

.font-select {
  appearance: none;
  width: 221px;
  height: 31px;
  margin-left: 9px;
  padding: 0 7px;
  border: 2px solid #8c8c8c;
  border-radius: 0;
  background: #efefef conic-gradient(from -40deg at 50% 100%, #111 80deg, transparent 0) no-repeat right 11px center / 10px 6px;
  font: inherit;
  color: #111;
}

.font-select.active {
  margin-left: 18px;
  border-color: #2a8ad8;
}

.arrange-tools {
  gap: 16px;
  margin-left: 11px;
}

.arrange-tools .boxed {
  width: 50px;
  height: 31px;
  margin: 0 -7px;
  border: 2px solid #2a8ad8;
  background: #f6f6f6;
}

.search-tools {
  margin-left: auto;
}

.search {
  display: flex;
  align-items: center;
  width: 197px;
  height: 29px;
  margin: 0 14px 0 5px;
  padding-right: 10px;
  background: #fff;
}

.search input {
  flex: 1;
  min-width: 0;
  padding: 0 4px;
  border: 0;
  background: none;
  font: inherit;
}

.search input::placeholder {
  color: #777;
}

.vi-icons {
  display: flex;
  align-items: center;
  gap: 2px;
  padding: 0 1px;
  border-left: 2px solid #7f7f7f;
}

.vi-num {
  font: 14px "Noto Sans", sans-serif;
}

.work {
  display: flex;
  flex: 1;
}

.canvas {
  flex: 1;
  background: #fff;
}

.canvas.grid {
  background: linear-gradient(#cbcbcb 2px, transparent 2px) 0 0 / 18px 18px,
    linear-gradient(to right, #cbcbcb 2px, transparent 2px) 0 0 / 18px 18px,
    #e1e1e1;
}

.vscroll {
  display: flex;
  flex-direction: column;
  align-items: center;
  justify-content: space-between;
  width: 25px;
  padding: 9px 0 7px;
}

.hscroll {
  display: flex;
  align-items: center;
  justify-content: space-between;
  height: 25px;
  padding: 0 31px 0 7px;
  position: relative;
}

.grip {
  position: absolute;
  right: 2px;
  bottom: 1px;
}

/* functions palette */
.palette {
  position: absolute;
  left: 1258px;
  top: 73px;
  bottom: 11px;
  display: flex;
  flex-direction: column;
  width: 498px;
  background: #f8f8f8;
  box-shadow: 0 2px 14px rgba(0, 0, 0, 0.4);
}

.palette-title {
  display: flex;
  align-items: center;
  justify-content: space-between;
  height: 50px;
  padding: 0 1px 0 15px;
  border-bottom: 1px solid #dcdcdc;
  background: #fff;
  color: #777;
}

.palette-close {
  width: 30px;
  height: 30px;
  margin-top: 10px;
  background: #e3e3e3;
  color: #fff;
}

.palette-tools {
  display: flex;
  gap: 20px;
  height: 36px;
  padding-left: 10px;
}

.palette-tools button {
  gap: 3px;
}

.palette-tools .caret {
  margin-left: -2px;
}

.palette-body {
  display: flex;
  flex: 1;
  min-height: 0;
}

.palette-list {
  flex: 1;
  overflow: hidden;
}

.items {
  display: grid;
  grid-template-columns: 156px 156px;
  grid-auto-rows: 123px;
  padding: 0 0 2px 6px;
}

.items.first {
  margin-top: -8px;
}

.item {
  display: flex;
  flex-direction: column;
  align-items: center;
  gap: 7px;
  white-space: nowrap;
}

.item span {
  padding-right: 3px;
}

.section-title {
  display: flex;
  align-items: center;
  height: 48px;
  margin-right: 2px;
  padding: 0 0 14px 3px;
  border-top: 2px solid #d2d2d2;
}

.section-title i {
  width: 5px;
  height: 24px;
  margin-right: 4px;
  border: solid #999;
  border-width: 0 2px;
}

.section-title svg {
  margin: 0 16px 8px 0;
}

.palette-scroll {
  display: flex;
  flex-direction: column;
  align-items: center;
  width: 25px;
  padding: 9px 0;
  background: #efefef;
}

.track {
  display: flex;
  flex-direction: column;
  flex: 1;
  width: 100%;
}

.track::before {
  content: "";
  height: 56%;
}

.thumb {
  width: 24px;
  height: 117px;
  background: #cdcdcd;
}

.fx {
  font: bold 18px "DejaVu Serif", serif;
  text-anchor: middle;
}

.tcp {
  font: bold 9px "Liberation Sans", sans-serif;
}

.rti {
  font: bold 15px "Noto Sans", sans-serif;
  fill: #fff;
  text-anchor: middle;
}

.dds {
  font: bold 10px "DejaVu Sans", sans-serif;
  fill: #fff;
  text-anchor: middle;
}

/* annotations */
.marks path {
  fill: none;
  stroke: #e61c1c;
  stroke-width: 6px;
  stroke-linecap: round;
  stroke-linejoin: round;
}

.watermark {
  position: absolute;
  right: 10px;
  bottom: 7px;
  font: 16px/24px "Liberation Sans", sans-serif;
  color: rgba(255, 255, 255, 0.75);
  text-shadow: 0 0 1px rgba(0, 0, 0, 0.3);
}
```
